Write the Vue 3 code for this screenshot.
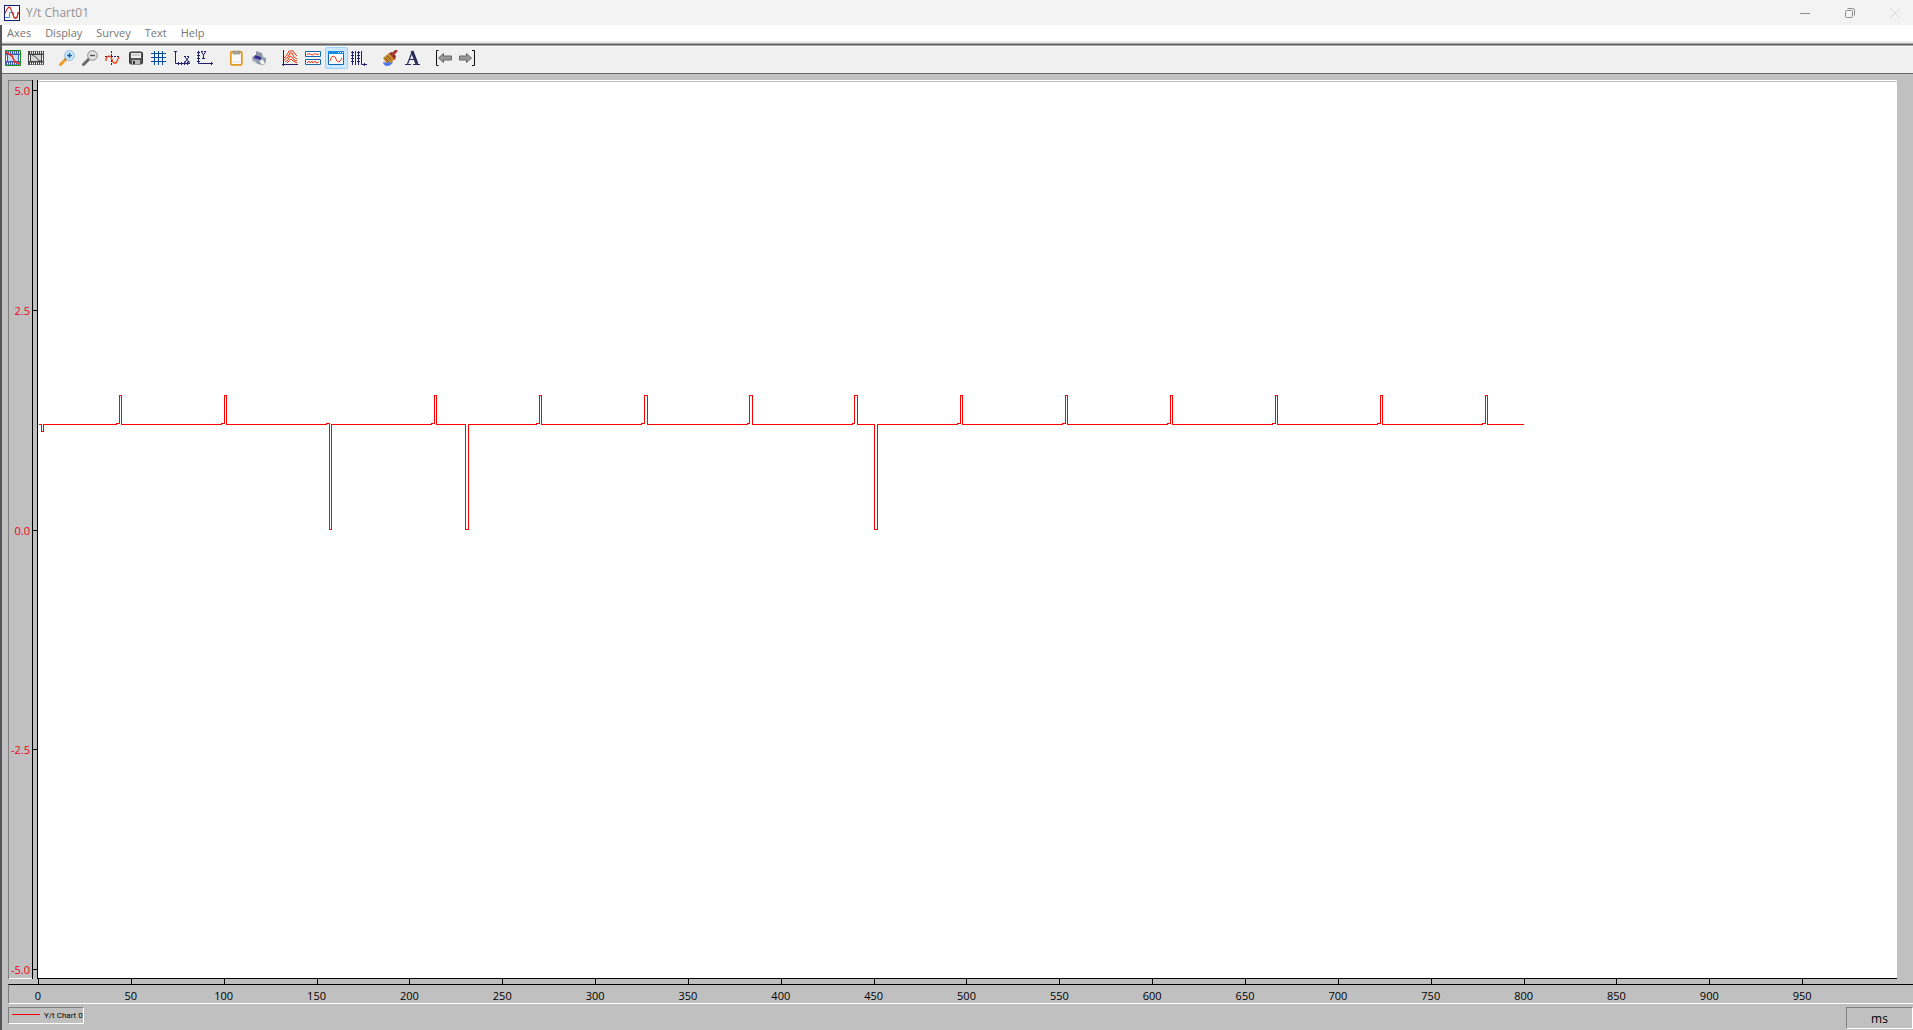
<template>
  <div class="window">
    <header class="titlebar">
      <svg class="app-icon" viewBox="0 0 16 16">
        <rect x=".5" y=".5" width="15" height="15" fill="#fff" stroke="#10206e" />
        <path d="M1 12.5h4.500v-5h4v5h4v-5h1.500" fill="none" stroke="#3b8fe0" />
        <path d="M1 8.500L3 4l2-2 1.500 1 2.500 7 2 3.500 1.500-.5L14 9l1-2" fill="none" stroke="#cf3325" stroke-width="1.200" />
      </svg>
      <h1>Y/t Chart01</h1>
      <div class="window-buttons">
        <button aria-label="Minimize">
          <svg viewBox="0 0 12 12"><path d="M1 6.500h10" stroke="#8c8c8c" /></svg>
        </button>
        <button aria-label="Restore">
          <svg viewBox="0 0 12 12" fill="none" stroke="#8c8c8c">
            <rect x="1.500" y="3.500" width="7" height="7" rx="1" />
            <path d="M3.500 1.500h5a2 2 0 0 1 2 2v5" />
          </svg>
        </button>
        <button aria-label="Close" disabled>
          <svg viewBox="0 0 12 12"><path d="M1 1l10 10M11 1L1 11" stroke="#dadada" /></svg>
        </button>
      </div>
    </header>

    <div class="body">
      <nav class="menubar">
        <button v-for="item in menu" :key="item">{{ item }}</button>
      </nav>

      <div class="toolbar">
        <div v-for="(group, g) in tools" :key="g" class="tool-group">
          <button
            v-for="tool in group"
            :key="tool.name"
            :class="{ active: tool.name === activeTool }"
            :aria-label="tool.name"
            @click="activeTool = tool.name"
          >
            <svg viewBox="0 0 16 16" fill="none" v-html="tool.icon"></svg>
          </button>
        </div>
      </div>

      <main class="chart">
        <div class="plot-row">
          <ol class="y-labels">
            <li v-for="v in yLabels" :key="v">{{ v }}</li>
          </ol>
          <div class="y-ticks">
            <i v-for="v in yLabels" :key="v"></i>
          </div>
          <div class="plot">
            <svg viewBox="0 0 1859 898" preserveAspectRatio="none">
              <path :d="trace" fill="none" stroke="#f00" vector-effect="non-scaling-stroke" shape-rendering="crispEdges" />
            </svg>
          </div>
        </div>

        <div class="x-ticks">
          <i v-for="t in xLabels" :key="t"></i>
        </div>
        <ol class="x-labels">
          <li v-for="t in xLabels" :key="t"><span>{{ t }}</span></li>
        </ol>

        <footer class="status">
          <div class="legend"><i></i>Y/t Chart 0</div>
          <div class="unit">ms</div>
        </footer>
      </main>
    </div>
  </div>
</template>

<script setup>
import { ref, computed } from 'vue'

const menu = ['Axes', 'Display', 'Survey', 'Text', 'Help']
const yLabels = ['5.0', '2.5', '0.0', '-2.5', '-5.0']
const xLabels = Array.from({ length: 20 }, (_, i) => i * 50)

const activeTool = ref('Single view')

const film = (frame, bg) => `
  <path d="M0 1h16v14H0z" fill="${frame}"/>
  <path d="M2 2.500h13M2 13.500h13" stroke="#fff" stroke-width="2" stroke-dasharray="1 1"/>
  <path d="M3 5h10v6H3z" fill="${bg}"/>
  <path d="M0 5h2v6H0zM14 5h2v6h-2z" fill="#f0f0f0"/>
  <path d="M.5 5v6M15.500 5v6" stroke="${frame}"/>`

const lens = (rim, glass, handle, sign) => `
  <path d="M1.500 14.500l5-5" stroke="${handle}" stroke-width="3" stroke-linecap="round"/>
  <path d="M6 9.500l1.500-1.500" stroke="#777" stroke-width="2"/>
  <circle cx="10.500" cy="5.500" r="4.800" fill="${glass}" stroke="${rim}"/>
  <path d="${sign}" stroke="${rim === '#888' ? '#555' : '#1763ad'}" stroke-width="1.400"/>`

const arrow = (head, bar) => `
  <path d="${head}" fill="#999" stroke="#666"/>
  <path d="${bar}" stroke="#111"/>`

const tools = [
  [
    { name: 'Record', icon: film('#3c5cb4', '#c4dcf4') + '<path d="M.5 .5h15v15H.5z" stroke="#149018"/><path d="M1 2l6 4 3 6 3 1 2 1" stroke="#f03218" stroke-width="1.600"/>' },
    { name: 'Stop', icon: film('#484848', '#d6d6d6') + '<path d="M4 5l4 2 2 3 3 1" stroke="#555"/>' },
  ],
  [
    { name: 'Zoom in', icon: lens('#82b5de', '#cfeafd', '#f09a28', 'M8 5.500h5M10.500 3v5') },
    { name: 'Zoom out', icon: lens('#888', '#e3e3e3', '#696969', 'M8 5.500h5') },
    { name: 'Cursor', icon: '<path d="M6.500 1v14M0 6.500h15" stroke="#20206c" stroke-dasharray="2 1"/><path d="M1 11V9l1-2 2-1 2 1 2 5 1 1h2l1-2 2-4" stroke="#f03a12" stroke-width="1.300"/>' },
    { name: 'Save', icon: '<path d="M1.500 3l1-1h11l1 1v10l-1 1h-11l-1-1z" fill="#555" stroke="#333"/><path d="M3 3h10v5H3z" fill="#eee"/><path d="M4 5h8" stroke="#aaa"/><path d="M4 10h8v4H4z" fill="#bbb"/><path d="M5 11h2v3H5z" fill="#333"/>' },
    { name: 'Grid', icon: '<path d="M3.500 1v14M7.500 1v14M11.500 1v14M0 3.500h15M0 7.500h15M0 11.500h15" stroke="#064a9b"/>' },
    { name: 'X axis', icon: '<path d="M1.500 1v12.500H16M0 1.500h3" stroke="#20206c"/><path d="M4.500 12v3M7.500 12v3M10.500 12v3M13.500 12v3" stroke="#20206c"/><path d="M10 6.500h2M13 6.500h2M11 7l4 5M15 7l-4 5M10 12h2M13 12h3" stroke="#20206c"/>' },
    { name: 'Y axis', icon: '<path d="M1.500 1v12.500H16M14.500 12v3" stroke="#20206c"/><path d="M0 2.500h3M0 5.500h3M0 8.500h3M0 11.500h3" stroke="#20206c"/><path d="M4 1.500h2M7 1.500h2M4.500 2l2 3 2-3M6.500 5v3M5 8.500h3" stroke="#20206c"/>' },
  ],
  [
    { name: 'Copy', icon: '<rect x="2.800" y="1.800" width="11" height="13" rx="1" fill="#fafafa" stroke="#e09a1c" stroke-width="1.700"/><path d="M5 12h7" stroke="#ddd"/><path d="M5 1h7v3H5z" fill="#a8a8a0" stroke="#8b7750" stroke-width=".5"/>' },
    { name: 'Print', icon: '<path d="M5 1l6 2 1 4-7-1z" fill="#9095a5"/><path d="M1 7l5-2 9 3v4l-5 3-8-3z" fill="#9299ac"/><path d="M4 5l6 2v3L3 8z" fill="#342c91"/><path d="M8 11l4-2 2 5-3 1z" fill="#f8faf8" stroke="#8a9e98" stroke-width=".6"/><path d="M1 11l4 2" stroke="#ddd" stroke-width="2"/><circle cx="12" cy="8" r=".8" fill="#3ccb85"/>' },
  ],
  [
    { name: 'Waterfall', icon: '<path d="M1.500 0v16M0 14.500h16" stroke="#20206c"/><path d="M2 8l3-3 2-4h4l2 3 2 2M2 10l4-3 2-4h2l2 4 3 2M3 12l3-2 2-4 2 1 2 3 3 1M5 13l2-2 2-2 2 2 4 2" stroke="#f03a12"/>' },
    { name: 'Split view', icon: '<path d="M.5 1.500h15v5H.5zM.5 9.500h15v5H.5z" fill="#fff" stroke="#1268b0"/><path d="M2 5l2-1.500 2 1 2 .5 2-1.500 2 1 2-.5M2 13l2-2 1 2 2-2 1 2 2-2 1 2 3-1" stroke="#f03a12"/>' },
    { name: 'Single view', icon: '<path d="M.5 1.500h15v13H.5z" fill="#fff" stroke="#1268b0"/><path d="M0 1h16v3H0z" fill="#168be0"/><path d="M10 2.500h5" stroke="#d9efff" stroke-dasharray="1 1"/><path d="M2 11l1-3 2-2 2 1 2 4 2 1 2-2 1-2" stroke="#f03a12"/>' },
    { name: 'Digital view', icon: '<path d="M1.500 1v14M4.500 1v14M7.500 1v14M10.500 1v13.500H16M13.500 13v3" stroke="#20206c"/><path d="M0 2.500h9M0 5.500h9M0 8.500h9M0 11.500h9" stroke="#20206c" stroke-dasharray="1 1"/>' },
  ],
  [
    { name: 'Colours', icon: '<path d="M1 12c2 1 4 0 7 0l3 0c-1 2-3 4-6 4-2 0-4-2-4-4z" fill="#5276ee"/><path d="M1 8l6-5 6 6-4 4-3-1-2 1z" fill="#c78a2d"/><path d="M3 8l4 4M5 6l4 4" stroke="#75502a"/><path d="M7 3l3-1 4 4-1 4z" fill="#942d26"/><path d="M11 4l3-3" stroke="#a63a30" stroke-width="3" stroke-linecap="round"/>' },
    { name: 'Font', icon: '<path d="M0 14.500h6M8 14.500h7M2.500 14l5-13M4 9.500h6" stroke="#29295e" stroke-width="1.200"/><path d="M7 1l5 13" stroke="#29295e" stroke-width="3"/>' },
  ],
  [
    { name: 'Previous', icon: arrow('M2.500 8l5-4.500V6h8v4h-8v2.500z', 'M2.500 .5h-2v15h2') },
    { name: 'Next', icon: arrow('M12.500 8l-5-4.500V6h-7v4h7v2.500z', 'M13 .5h2.500v15H13') },
  ],
]

// signal levels and pulse positions, in plot units
const LOW = 449.5
const BASE = 344.5
const PRE = 343.5
const HIGH = 315.5

const pulses = [
  { x: 3, w: 2, y: 351.5 },
  { x: 81, w: 2, y: HIGH, pre: 3 },
  { x: 186, w: 2, y: HIGH, pre: 3 },
  { x: 291, w: 2, y: LOW, pre: 3 },
  { x: 396, w: 2, y: HIGH, pre: 3 },
  { x: 427, w: 3, y: LOW },
  { x: 501, w: 2, y: HIGH, pre: 3 },
  { x: 606, w: 3, y: HIGH, pre: 3 },
  { x: 711, w: 3, y: HIGH, pre: 2 },
  { x: 816, w: 3, y: HIGH, pre: 2 },
  { x: 836, w: 3, y: LOW },
  { x: 922, w: 2, y: HIGH, pre: 3 },
  { x: 1027, w: 2, y: HIGH, pre: 3 },
  { x: 1132, w: 2, y: HIGH, pre: 3 },
  { x: 1237, w: 2, y: HIGH, pre: 3 },
  { x: 1342, w: 2, y: HIGH, pre: 3 },
  { x: 1447, w: 2, y: HIGH, pre: 3 },
]

const trace = computed(() => {
  let d = `M1 ${BASE}`
  for (const p of pulses) {
    const x = p.x + 0.5
    if (p.pre) d += `H${x - p.pre}V${PRE}`
    d += `H${x}V${p.y}H${x + p.w}V${BASE}`
  }
  return d + 'H1486'
})
</script>

<style>
body {
  margin: 0;
}
</style>

<style scoped>
.window {
  display: flex;
  flex-direction: column;
  min-height: 100vh;
  font-family: "Open Sans", "Noto Sans", sans-serif;
  font-size: 12px;
  background: #c0c0c0;
}
button {
  border: 0;
  padding: 0;
  background: none;
  font: inherit;
  color: inherit;
}
ol {
  list-style: none;
  margin: 0;
  padding: 0;
}
svg {
  display: block;
}

.titlebar {
  display: flex;
  align-items: center;
  height: 25px;
  padding-left: 4px;
  background: #f3f3f3;
  color: #929292;
}
.app-icon {
  width: 16px;
  height: 16px;
}
h1 {
  margin: 0 0 0 6px;
  font-size: 12px;
  font-weight: 400;
}
.window-buttons {
  display: flex;
  margin-left: auto;
}
.window-buttons button {
  display: grid;
  place-items: center;
  box-sizing: border-box;
  width: 45px;
  height: 24px;
}
.window-buttons button:last-child {
  width: 41px;
  padding-left: 4px;
}
.window-buttons svg {
  width: 12px;
  height: 12px;
}

.body {
  flex: 1;
  display: flex;
  flex-direction: column;
  border-left: 2px solid #55555a;
}
.menubar {
  display: flex;
  gap: 14px;
  height: 16px;
  padding-left: 5px;
  border-bottom: 2px solid #eee;
  background: #fff;
  color: #757575;
  font-size: 11px;
  line-height: 16px;
}
.toolbar {
  display: flex;
  gap: 8px;
  height: 28px;
  margin-top: 1px;
  border-top: 1px solid #696969;
  border-bottom: 1px solid #696969;
  box-shadow: 0 -1px #a0a0a0, inset 0 1px #a0a0a0, inset 0 2px #fff;
  background: #f0f0f0;
}
.tool-group {
  display: flex;
  padding-top: 2px;
}
.tool-group button {
  display: grid;
  place-items: center;
  box-sizing: border-box;
  width: 23px;
  height: 22px;
  padding-right: 1px;
  border: 1px solid transparent;
  border-radius: 2px;
}
.tool-group button.active {
  border-color: #99d1ff;
  background: #cce8ff;
}
.tool-group svg {
  width: 16px;
  height: 16px;
}

.chart {
  flex: 1;
  display: flex;
  flex-direction: column;
  padding: 6px 0 0 6px;
  color: #000;
  font-size: 11px;
}
.plot-row {
  flex: 1;
  display: flex;
  padding-right: 16px;
}
.y-labels,
.y-ticks {
  display: flex;
  flex-direction: column;
  justify-content: space-between;
  box-sizing: border-box;
}
.y-labels {
  width: 25px;
  padding-right: 2px;
  border-left: 1px solid #808080;
  border-right: 1px solid #000;
  box-shadow: inset 0 1px #808080, inset 0 -1px #fff;
  color: #f00018;
  line-height: 22px;
  text-align: right;
}
.y-labels li {
  height: 20px;
}
.y-ticks {
  width: 4px;
}
.y-ticks i {
  height: 1px;
  margin: 10px 0 9px;
  background: #000;
}
.plot {
  flex: 1;
  display: flex;
  border-left: 1px solid #000;
  border-bottom: 1px solid #000;
  background: #fff;
  box-shadow: inset 0 1px #fff, inset 0 2px #c0c0c0;
}
.plot svg {
  width: 100%;
  height: 100%;
  flex: 1;
}

.x-ticks,
.x-labels {
  display: grid;
  grid-template-columns: repeat(20, 1fr);
  padding: 0 18px 0 30px;
}
.x-ticks {
  height: 5px;
}
.x-ticks i {
  border-left: 1px solid #000;
}
.x-labels {
  height: 18px;
  padding-left: 29px;
  border-top: 1px solid #000;
  border-left: 1px solid #808080;
  border-bottom: 1px solid #fff;
  line-height: 22px;
}
.x-labels span {
  display: block;
  width: 40px;
  margin-left: -20px;
  text-align: center;
}

.status {
  display: flex;
  justify-content: space-between;
  align-items: flex-start;
  height: 23px;
  padding-top: 3px;
}
.legend,
.unit {
  display: flex;
  align-items: center;
  border: 1px solid;
  border-color: #808080 #fff #fff #808080;
}
.legend {
  gap: 4px;
  height: 15px;
  padding: 0 0 0 3px;
  font-family: Roboto, sans-serif;
  font-size: 8px;
}
.legend i {
  width: 28px;
  height: 1px;
  margin-bottom: 3px;
  background: #f00;
}
.unit {
  justify-content: center;
  box-sizing: border-box;
  width: 67px;
  height: 22px;
  font-size: 12px;
}
</style>
